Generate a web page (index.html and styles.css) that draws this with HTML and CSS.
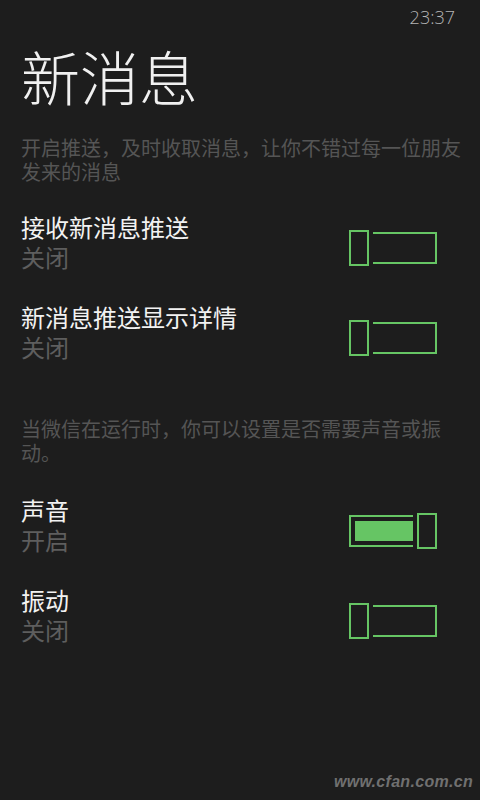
FILE: index.html
```html
<!DOCTYPE html>
<html lang="zh-CN">
<head>
    <meta charset="utf-8">
    <title>新消息</title>
    <link rel="stylesheet" href="styles.css">
</head>
<body>
    <div class="status-bar">
        <span class="time">23:37</span>
    </div>

    <div class="page">
        <h1 class="title">新消息</h1>

        <p class="desc">开启推送，及时收取消息，让你不错过每一位朋友发来的消息</p>

        <div class="setting">
            <div class="setting-text">
                <div class="setting-name">接收新消息推送</div>
                <div class="setting-state">关闭</div>
            </div>
            <div class="toggle">
                <div class="track"><div class="fill"></div></div>
                <div class="thumb"></div>
            </div>
        </div>

        <div class="setting">
            <div class="setting-text">
                <div class="setting-name">新消息推送显示详情</div>
                <div class="setting-state">关闭</div>
            </div>
            <div class="toggle">
                <div class="track"><div class="fill"></div></div>
                <div class="thumb"></div>
            </div>
        </div>

        <p class="desc desc-second">当微信在运行时，你可以设置是否需要声音或振动。</p>

        <div class="setting">
            <div class="setting-text">
                <div class="setting-name">声音</div>
                <div class="setting-state">开启</div>
            </div>
            <div class="toggle on">
                <div class="track"><div class="fill"></div></div>
                <div class="thumb"></div>
            </div>
        </div>

        <div class="setting">
            <div class="setting-text">
                <div class="setting-name">振动</div>
                <div class="setting-state">关闭</div>
            </div>
            <div class="toggle">
                <div class="track"><div class="fill"></div></div>
                <div class="thumb"></div>
            </div>
        </div>
    </div>

    <div class="watermark">www.cfan.com.cn</div>
</body>
</html>
```

FILE: styles.css
```css
body {
    margin: 0;
    padding: 0;
    width: 480px;
    height: 800px;
    background-color: #1d1d1d;
    font-family: "Noto Sans CJK SC", "Noto Sans", sans-serif;
    color: #f2f2f2;
    position: relative;
    overflow: hidden;
}

.status-bar {
    height: 34px;
    line-height: 34px;
    text-align: right;
    padding-right: 25px;
}

.time {
    font-family: "Open Sans", "Noto Sans", sans-serif;
    font-weight: 300;
    font-size: 18px;
    color: #b4b4b4;
}

.page {
    padding: 0 21px;
}

.title {
    margin: 7px 0 0 0;
    font-size: 59px;
    font-weight: 300;
    line-height: 70px;
    color: #f0f0f0;
}

.desc {
    margin: 25px -6px 0 0;
    font-size: 20px;
    line-height: 24px;
    color: #555555;
}

.desc-second {
    margin-top: 55px;
}

.setting {
    display: flex;
    justify-content: space-between;
    align-items: flex-start;
    margin-top: 28px;
    padding-right: 22px;
}

.setting + .setting,
.desc-second + .setting {
    margin-top: 30px;
}

.setting-name {
    font-size: 24px;
    line-height: 30px;
    color: #f2f2f2;
}

.setting-state {
    font-size: 24px;
    line-height: 30px;
    color: #5e5e5e;
}

/* Toggle switch */
.toggle {
    position: relative;
    width: 88px;
    height: 36px;
    margin-top: 18px;
}

.track {
    box-sizing: border-box;
    margin-top: 2px;
    height: 32px;
    border: 2px solid #66c564;
    padding: 4px;
}

.fill {
    height: 100%;
}

.toggle.on .fill {
    background-color: #66c564;
}

.thumb {
    position: absolute;
    top: 0;
    left: 0;
    box-sizing: border-box;
    width: 20px;
    height: 36px;
    border: 2px solid #66c564;
    background-color: #1d1d1d;
    box-shadow: 0 0 0 4px #1d1d1d;
}

.toggle.on .thumb {
    left: auto;
    right: 0;
}

.watermark {
    position: absolute;
    right: 7px;
    bottom: 9px;
    font-family: "Liberation Sans", sans-serif;
    font-size: 16px;
    font-weight: bold;
    font-style: italic;
    letter-spacing: 0.3px;
    color: #707070;
}
```
